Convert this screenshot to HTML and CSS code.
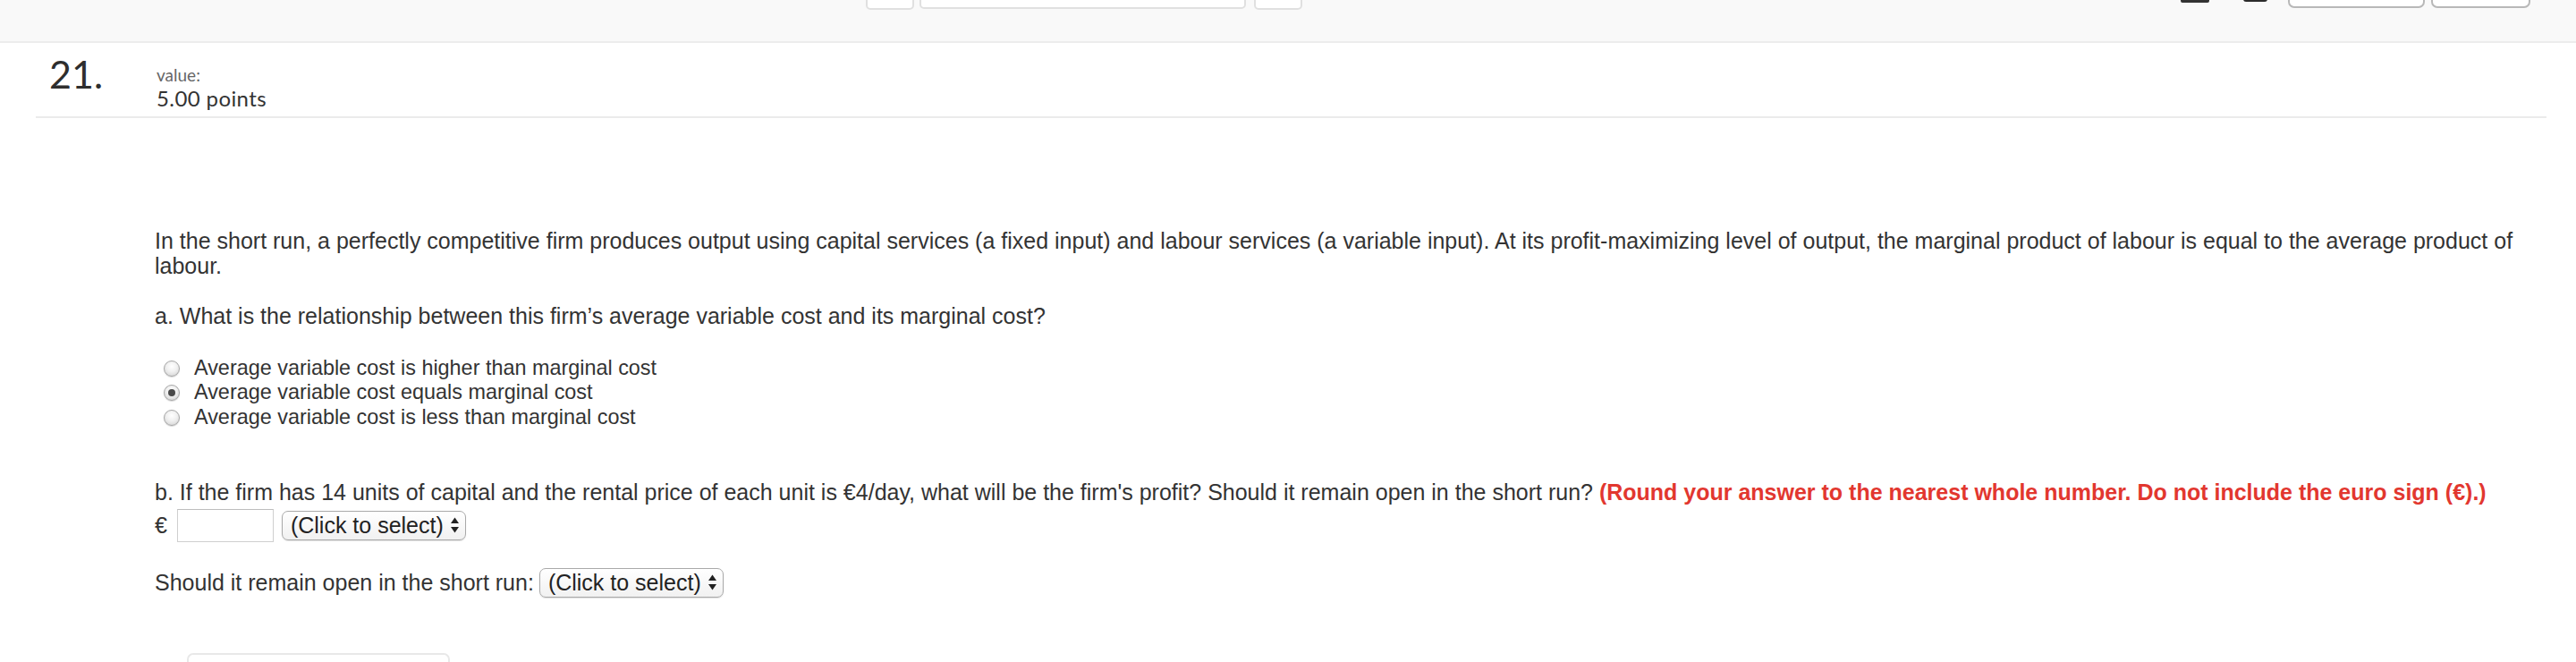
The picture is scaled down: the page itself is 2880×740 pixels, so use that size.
FILE: index.html
```html
<!DOCTYPE html>
<html>
<head>
<meta charset="utf-8">
<link rel="stylesheet" href="styles.css">
</head>
<body>
<header class="topbar">
  <div class="toolbar">
    <div class="nav-group">
      <span class="tbtn tbtn-sm"></span>
      <span class="tbtn tbtn-wide"></span>
      <span class="tbtn tbtn-sm tbtn-last"></span>
    </div>
    <div class="tools">
      <span class="ico-box"></span>
      <span class="ico-solid"></span>
      <span class="rbtn rbtn-a"></span>
      <span class="rbtn rbtn-b"></span>
    </div>
  </div>
</header>

<main class="page">
  <div class="question-head">
    <div class="qnum">21.</div>
    <div class="meta">
      <div class="val-label">value:</div>
      <div class="val-points">5.00 points</div>
    </div>
  </div>
  <div class="rule"></div>

  <div class="qbody">
    <p class="intro">In the short run, a perfectly competitive firm produces output using capital services (a fixed input) and labour services (a variable input). At its profit-maximizing level of output, the marginal product of labour is equal to the average product of labour.</p>
    <p class="part">a. What is the relationship between this firm’s average variable cost and its marginal cost?</p>
    <ul class="choices">
      <li class="choice"><span class="radio"></span>Average variable cost is higher than marginal cost</li>
      <li class="choice"><span class="radio radio-on"></span>Average variable cost equals marginal cost</li>
      <li class="choice"><span class="radio"></span>Average variable cost is less than marginal cost</li>
    </ul>
    <p class="part part-b">b. If the firm has 14 units of capital and the rental price of each unit is €4/day, what will be the firm's profit? Should it remain open in the short run? <strong class="hint">(Round your answer to the nearest whole number. Do not include the euro sign (€).)</strong></p>
    <div class="answer-row">
      <span class="euro">€</span>
      <span class="num-input"></span>
      <span class="select">(Click to select)<svg class="arrows" width="11" height="20" viewBox="0 0 11 20"><path d="M5.5 1.5 L10 8 L1 8 Z" fill="#222"/><path d="M5.5 18.5 L10 12 L1 12 Z" fill="#222"/></svg></span>
    </div>
    <div class="open-row">
      <span class="open-label">Should it remain open in the short run:</span>
      <span class="select">(Click to select)<svg class="arrows" width="11" height="20" viewBox="0 0 11 20"><path d="M5.5 1.5 L10 8 L1 8 Z" fill="#222"/><path d="M5.5 18.5 L10 12 L1 12 Z" fill="#222"/></svg></span>
    </div>
    <div class="bottom-box"></div>
  </div>
</main>
</body>
</html>
```

FILE: styles.css
```css
html, body {
  margin: 0;
  padding: 0;
  background: #ffffff;
  height: 740px;
  overflow: hidden;
}

body {
  font-family: "Liberation Sans", Arial, sans-serif;
  color: #333333;
}

.page {
  height: 692px;
  overflow: hidden;
}

/* ---------- top bar ---------- */
.topbar {
  height: 46px;
  background: #f9f9f9;
  border-bottom: 2px solid #ececec;
}

.toolbar {
  display: flex;
  align-items: flex-end;
  height: 11px;
}

.nav-group {
  display: flex;
  align-items: flex-end;
  margin-left: 968px;
}

.tbtn {
  display: block;
  height: 40px;
  background: #ffffff;
  border: 2px solid #e0e0e0;
  border-radius: 5px;
  box-sizing: border-box;
}

.tbtn-sm {
  width: 54px;
}

.tbtn-wide {
  width: 365px;
  margin: 0 9px 1px 6px;
}

.tools {
  display: flex;
  align-items: flex-end;
  margin-left: auto;
  margin-right: 51px;
}

.ico-box {
  display: block;
  width: 32px;
  height: 20px;
  border: 3px solid #333333;
  border-radius: 2px;
  box-sizing: border-box;
  margin-bottom: 8px;
}

.ico-solid {
  display: block;
  width: 27px;
  height: 20px;
  background: #2c2c2c;
  border-radius: 0 0 3px 3px;
  margin: 0 23px 9px 38px;
}

.rbtn {
  display: block;
  height: 40px;
  background: #ffffff;
  border: 2px solid #b8b8b8;
  border-radius: 7px;
  box-sizing: border-box;
  margin-bottom: 2px;
}

.rbtn-a {
  width: 153px;
}

.rbtn-b {
  width: 111px;
  margin-left: 7px;
}

/* ---------- question header ---------- */
.question-head {
  display: flex;
  align-items: flex-start;
  padding: 9px 0 7px 55px;
}

.qnum {
  width: 120px;
  font-family: Lato, "Open Sans", sans-serif;
  font-size: 43px;
  line-height: 1.2;
  color: #2e2e2e;
}

.meta {
  margin-top: 16px;
  font-family: Lato, "Open Sans", sans-serif;
}

.val-label {
  font-size: 19px;
  line-height: 1.2;
  color: #666666;
}

.val-points {
  font-size: 24px;
  line-height: 1.15;
  letter-spacing: 0.4px;
  color: #333333;
}

.rule {
  height: 2px;
  background: #ebebeb;
  margin: 0 33px 0 40px;
}

/* ---------- question body ---------- */
.qbody {
  padding: 124px 35px 0 173px;
  font-size: 25px;
  line-height: 27.5px;
}

.qbody .intro,
.qbody .part {
  margin: 0;
}

.qbody .intro {
  margin-bottom: 29px;
}

.choices {
  list-style: none;
  margin: 30px 0 57px 10px;
  padding: 0;
  font-size: 23.4px;
}

.choice {
  display: flex;
  align-items: center;
  height: 27.5px;
}

.radio {
  display: inline-block;
  width: 18px;
  height: 18px;
  box-sizing: border-box;
  border-radius: 50%;
  border: 1px solid #a6a6a6;
  background: radial-gradient(circle at 50% 35%, #ffffff 0%, #f0f0f0 45%, #cfcfcf 100%);
  box-shadow: 0 1px 1px rgba(0, 0, 0, 0.15);
  margin-right: 16px;
  position: relative;
}

.radio-on::after {
  content: "";
  position: absolute;
  left: 4px;
  top: 4px;
  width: 8px;
  height: 8px;
  border-radius: 50%;
  background: #4a4a4a;
}

.hint {
  color: #e2372f;
  font-weight: bold;
}

.answer-row {
  display: flex;
  align-items: center;
  height: 37px;
  margin-top: 4px;
}

.euro {
  margin-right: 11px;
}

.num-input {
  display: block;
  width: 108px;
  height: 37px;
  box-sizing: border-box;
  border: 1px solid #cfcfcf;
  border-top-color: #bdbdbd;
  background: #ffffff;
  margin-right: 9px;
}

.select {
  display: flex;
  align-items: center;
  width: 206px;
  height: 33px;
  box-sizing: border-box;
  padding: 0 6px 0 9px;
  border: 1px solid #a9a9a9;
  border-radius: 7px;
  background: linear-gradient(#ffffff, #f1f1f1);
  box-shadow: 0 1px 1px rgba(0, 0, 0, 0.12);
  color: #222222;
  font-size: 25px;
  white-space: nowrap;
}

.arrows {
  margin-left: auto;
}

.open-row {
  display: flex;
  align-items: center;
  height: 33px;
  margin-top: 29px;
}

.open-label {
  margin-right: 6px;
}

.bottom-box {
  width: 294px;
  height: 60px;
  box-sizing: border-box;
  margin: 62px 0 0 36px;
  border: 2px solid #e8e8e8;
  border-radius: 7px;
}
```
